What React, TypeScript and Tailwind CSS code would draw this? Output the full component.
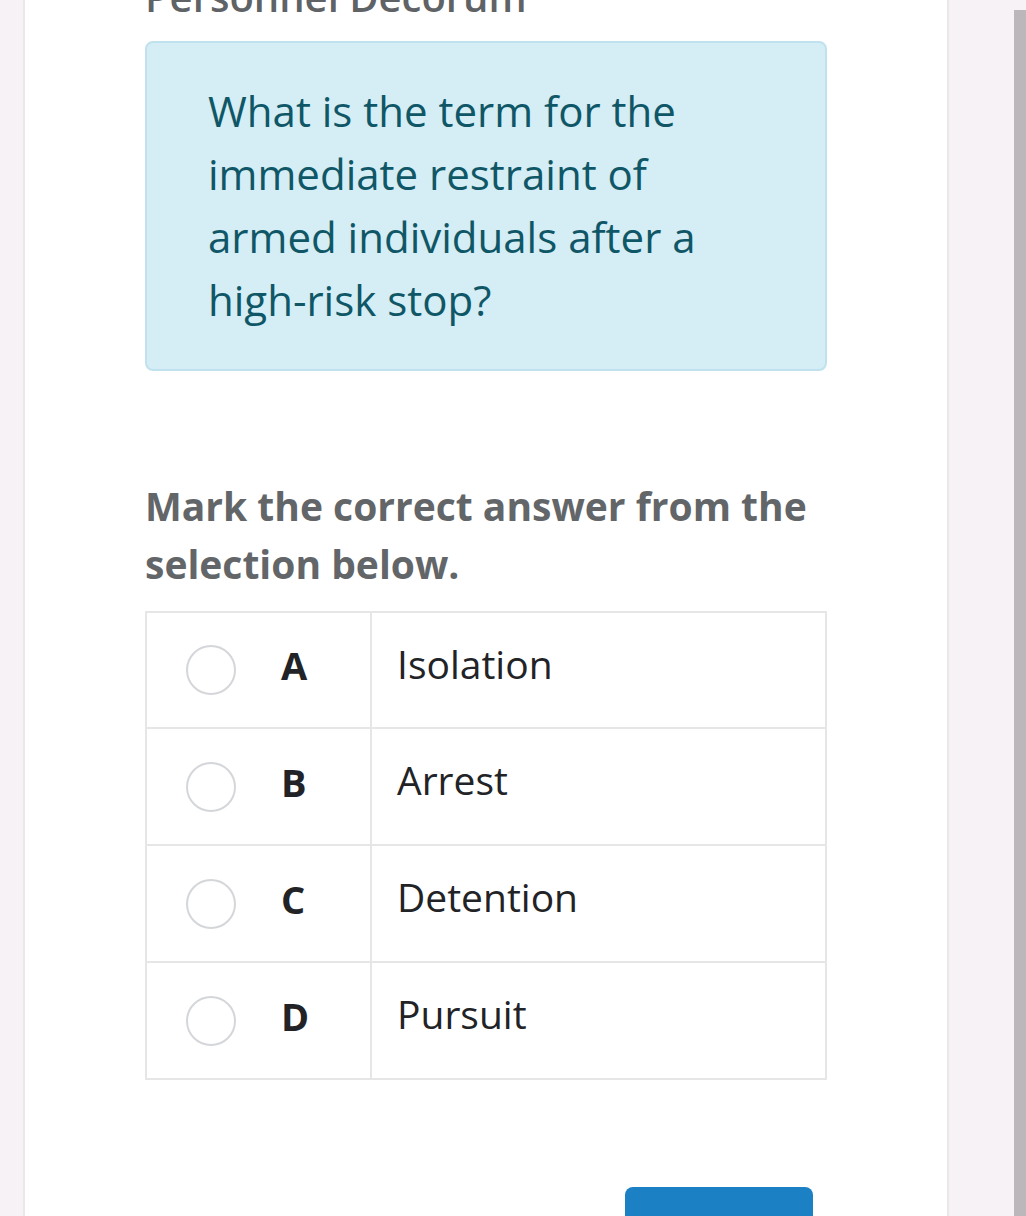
import React from "react";

const options = [
  { letter: "A", text: "Isolation" },
  { letter: "B", text: "Arrest" },
  { letter: "C", text: "Detention" },
  { letter: "D", text: "Pursuit" },
];

export default function App() {
  return (
    <div
      className="relative h-[1216px] w-full overflow-hidden bg-[#f6f2f6]"
      style={{ fontFamily: '"Open Sans", "Noto Sans", sans-serif' }}
    >
      <div className="ml-[23px] flow-root h-full w-[926px] border-x-[2px] border-x-[#ebe7eb] bg-white pl-[120px]">
        <div className="w-[682px]">
          <h1 className="-mt-[27px] text-[40px] leading-[48px] font-semibold text-[#606366]">
            Personnel Decorum
          </h1>

          <div className="mt-[20px] rounded-[8px] border-2 border-[#bfe2ee] bg-[#d5edf5] pl-[61px] pr-[97px] pt-[36px] pb-[38px]">
            <p className="text-[42px] leading-[63px] text-[#0f5766]">
              What is the term for the immediate restraint of armed individuals after a high-risk stop?
            </p>
          </div>

          <p className="mt-[106px] text-[39px] leading-[58px] font-bold text-[#636669]">
            Mark the correct answer from the selection below.
          </p>

          <div className="mt-[18px] border-2 border-[#e6e6e6]">
            {options.map((o, i) => (
              <div
                key={o.letter}
                className={`flex ${i > 0 ? "h-[117px] border-t-2 border-[#e6e6e6]" : "h-[114px]"}`}
              >
                <div className="flex w-[225px] items-center border-r-2 border-[#e6e6e6] pl-[39px]">
                  <span className="block h-[50px] w-[50px] rounded-full border-2 border-[#d4d6da]" />
                  <span className="ml-[45px] pb-[9px] text-[38px] font-bold text-[#222326]">
                    {o.letter}
                  </span>
                </div>
                <div className="flex flex-1 items-center pb-[12px] pl-[25px] text-[39px] text-[#222326]">
                  {o.text}
                </div>
              </div>
            ))}
          </div>

          <div className="mt-[107px] flex justify-end pr-[14px]">
            <div className="h-[60px] w-[188px] rounded-[8px] bg-[#1b80c4]" />
          </div>
        </div>
      </div>

      <div className="absolute right-0 top-[10px] bottom-0 w-[12px] bg-[#bcb7bb]" />
    </div>
  );
}
